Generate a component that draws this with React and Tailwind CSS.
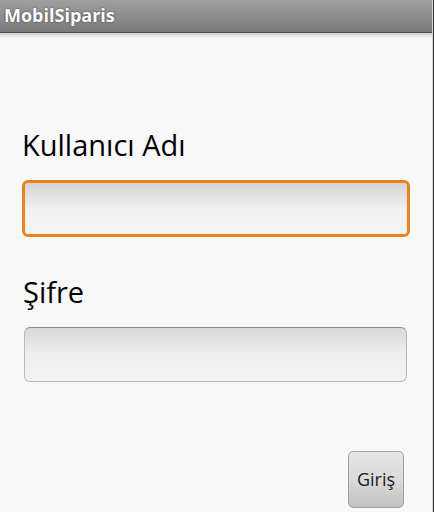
export default function App() {
  return (
    <div className="flex h-[512px] w-[434px] overflow-hidden bg-[#f8f8f8] font-['Open_Sans','DejaVu_Sans',sans-serif]">
      <div className="flex flex-1 flex-col border-r border-[#d6d6d6]">
        {/* Title bar */}
        <div className="h-[33px] shrink-0 border-b border-[#4a4a4a] bg-gradient-to-b from-[#a0a0a0] to-[#7a7a7a] pl-[4px] pt-[4px] text-[18px] font-bold leading-[22px] text-white [text-shadow:0_0_2px_rgba(0,0,0,0.6)]">
          MobilSiparis
        </div>
        <div className="h-[6px] bg-gradient-to-b from-[#d0d0d0] to-[#f8f8f8]" />

        <div className="flex flex-1 flex-col px-[22px]">
          <div className="mt-[87px] text-[29px] leading-[38px] text-black">Kullanıcı Adı</div>
          <div className="mt-[16px] h-[57px] w-[388px] rounded-[6px] border-[3px] border-[#e8821c] bg-gradient-to-b from-[#d4d4d4] via-[#f0f0f0] to-[#f4f4f4]" />

          <div className="mt-[36px] ml-[1px] text-[29px] leading-[38px] text-black">Şifre</div>
          <div className="ml-[2px] mt-[16px] h-[55px] w-[383px] rounded-[6px] border border-[#b8b8b8] border-t-[#8a8a8a] bg-gradient-to-b from-[#d8d8d8] via-[#efefef] to-[#f2f2f2]" />

          <div className="mt-auto mb-[4px] flex justify-end pr-[6px]">
            <button className="flex h-[57px] w-[56px] items-center justify-center rounded-[5px] border border-[#a0a0a0] bg-gradient-to-b from-[#e6e6e6] via-[#dadada] to-[#c2c2c2] text-[18px] text-[#1a1a1a]">
              Giriş
            </button>
          </div>
        </div>
      </div>
      <div className="w-[4px] shrink-0 bg-[#3a3a3a]" />
    </div>
  )
}
